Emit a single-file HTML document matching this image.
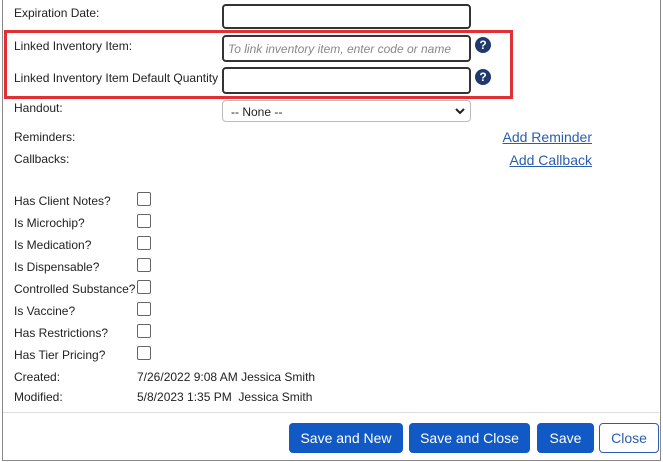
<!DOCTYPE html>
<html><head><style>
body{margin:0;width:663px;height:462px;background:#fff;font-family:"Liberation Sans",sans-serif;font-size:12px;color:#222;position:relative;overflow:hidden}
.a{position:absolute;white-space:nowrap}
.frame{position:absolute;left:2px;top:-2px;width:657px;height:461px;border:1px solid #888;}
.in{position:absolute;left:222px;width:245px;border:2px solid #333;border-radius:4px;background:#fff}
.help{position:absolute;left:475px;width:16px;height:16px;border-radius:50%;background:#1f3a6e;color:#fff;font-weight:bold;font-size:12px;text-align:center;line-height:16px}
.cb{position:absolute;left:137px;width:12px;height:12px;border:1px solid #666;border-radius:2px;background:#fff}
.btn{position:absolute;top:423px;height:30px;line-height:30px;background:#1159c4;color:#fff;border-radius:4px;text-align:center;font-size:14px}
.lnk{color:#2a5db0;text-decoration:underline;font-size:14px}
</style></head><body>
<div class="frame"></div>
<div class="a" style="left:14px;top:6px">Expiration Date:</div>
<div class="in" style="top:4px;height:21px"></div>
<div class="a" style="left:4px;top:30px;width:503px;height:63px;border:3px solid #e03036"></div>
<div class="a" style="left:14px;top:39px">Linked Inventory Item:</div>
<div class="in" style="top:35px;height:23px"><span class="a" style="left:4px;top:5px;color:#888;font-style:italic">To link inventory item, enter code or name</span></div>
<div class="help" style="top:37px">?</div>
<div class="a" style="left:14px;top:71px">Linked Inventory Item Default Quantity</div>
<div class="in" style="top:67px;height:23px"></div>
<div class="help" style="top:69px">?</div>
<div class="a" style="left:14px;top:101px">Handout:</div>
<div class="a" style="left:222px;top:100px;width:247px;height:20px;border:1px solid #bbb;border-radius:4px"><span class="a" style="left:8px;top:4px">-- None --</span><svg class="a" style="right:5px;top:7px" width="10" height="7" viewBox="0 0 10 7"><path d="M1 1 L5 5 L9 1" stroke="#222" stroke-width="2" fill="none"/></svg></div>
<div class="a" style="left:14px;top:130px">Reminders:</div>
<div class="a lnk" style="right:71px;top:129px">Add Reminder</div>
<div class="a" style="left:14px;top:152px">Callbacks:</div>
<div class="a lnk" style="right:71px;top:152px">Add Callback</div>
<div class="a" style="left:14px;top:194px">Has Client Notes?</div><div class="cb" style="top:192px"></div>
<div class="a" style="left:14px;top:216px">Is Microchip?</div><div class="cb" style="top:214px"></div>
<div class="a" style="left:14px;top:238px">Is Medication?</div><div class="cb" style="top:236px"></div>
<div class="a" style="left:14px;top:260px">Is Dispensable?</div><div class="cb" style="top:258px"></div>
<div class="a" style="left:14px;top:282px">Controlled Substance?</div><div class="cb" style="top:280px"></div>
<div class="a" style="left:14px;top:304px">Is Vaccine?</div><div class="cb" style="top:302px"></div>
<div class="a" style="left:14px;top:326px">Has Restrictions?</div><div class="cb" style="top:324px"></div>
<div class="a" style="left:14px;top:348px">Has Tier Pricing?</div><div class="cb" style="top:346px"></div>
<div class="a" style="left:14px;top:370px">Created:</div><div class="a" style="left:137px;top:370px">7/26/2022 9:08 AM Jessica Smith</div>
<div class="a" style="left:14px;top:390px">Modified:</div><div class="a" style="left:137px;top:390px">5/8/2023 1:35 PM &nbsp;Jessica Smith</div>
<div class="a" style="left:3px;top:412px;width:656px;height:1px;background:#ddd"></div>
<div class="btn" style="left:289px;width:114px">Save and New</div>
<div class="btn" style="left:409px;width:121px">Save and Close</div>
<div class="btn" style="left:537px;width:57px">Save</div>
<div class="btn" style="left:599px;width:58px;height:28px;line-height:28px;background:#fff;color:#2a5db0;border:1px solid #2a5db0">Close</div>
</body></html>
